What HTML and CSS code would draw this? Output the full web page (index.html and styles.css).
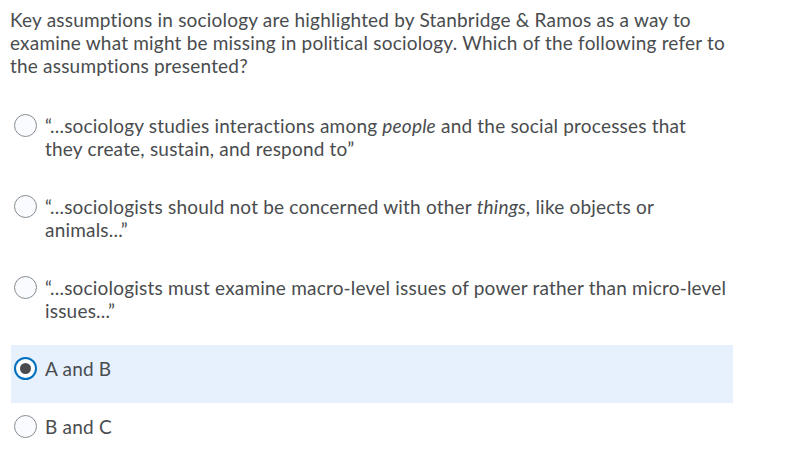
FILE: index.html
```html
<!DOCTYPE html>
<html lang="en">
<head>
<meta charset="utf-8">
<title>Quiz question</title>
<link rel="stylesheet" href="styles.css">
</head>
<body>
<div class="quiz">
  <p class="question">Key assumptions in sociology are highlighted by Stanbridge &amp; Ramos as a way to examine what might be missing in political sociology. Which of the following refer to the assumptions presented?</p>
  <div class="options">
    <label class="option">
      <span class="radio"></span>
      <span class="text">“...sociology studies interactions among <em>people</em> and the social processes that they create, sustain, and respond to”</span>
    </label>
    <label class="option">
      <span class="radio"></span>
      <span class="text">“...sociologists should not be concerned with other <em>things</em>, like objects or animals...”</span>
    </label>
    <label class="option">
      <span class="radio"></span>
      <span class="text">“...sociologists must examine macro-level issues of power rather than micro-level issues...”</span>
    </label>
    <label class="option selected">
      <span class="radio"></span>
      <span class="text">A and B</span>
    </label>
    <label class="option">
      <span class="radio"></span>
      <span class="text">B and C</span>
    </label>
  </div>
</div>
</body>
</html>
```

FILE: styles.css
```css
html, body {
  margin: 0;
  padding: 0;
  background: #ffffff;
}

body {
  font-family: Lato, "Noto Sans", sans-serif;
  font-size: 19px;
  letter-spacing: 0.2px;
  line-height: 23px;
  color: #494c4e;
}

.quiz {
  width: 723px;
  padding: 8px 0 0 10px;
}

.question {
  margin: 0 0 25px 0;
}

.options {
  display: flex;
  flex-direction: column;
  margin-left: 1px;
}

.option {
  display: flex;
  align-items: flex-start;
  gap: 8px;
  padding: 12px 5px 23px 3px;
}

.option.selected {
  background: #e6f1fd;
}

.radio {
  flex: none;
  box-sizing: border-box;
  width: 23px;
  height: 23px;
  border-radius: 50%;
  border: 1px solid #868c8f;
  background: #f9fbff;
  display: flex;
  align-items: center;
  justify-content: center;
}

.selected .radio {
  border: 2px solid #006fbf;
  background: #ffffff;
}

.selected .radio::after {
  content: "";
  width: 11px;
  height: 11px;
  border-radius: 50%;
  background: #494c4e;
}

.text em {
  font-style: italic;
}
```
